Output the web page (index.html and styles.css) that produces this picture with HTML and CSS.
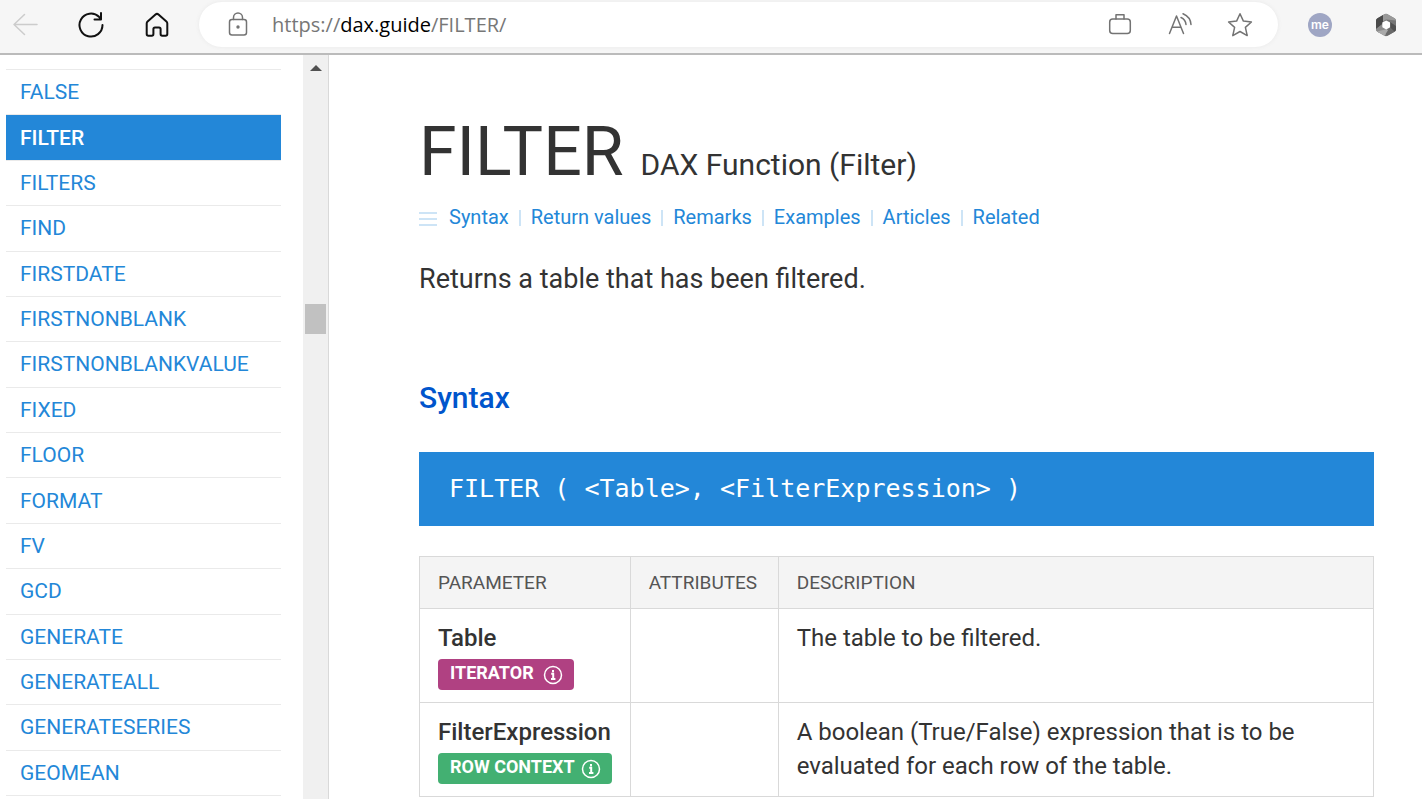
FILE: index.html
```html
<!DOCTYPE html>
<html lang="en">
<head>
<meta charset="utf-8">
<meta name="viewport" content="width=device-width, initial-scale=1">
<title>FILTER – DAX Guide</title>
<link rel="stylesheet" href="styles.css">
</head>
<body>
<header class="toolbar">
  <div class="toolbar-nav">
    <button class="tool" type="button" aria-label="Back" disabled>
      <svg class="icon icon-faded" viewBox="0 0 26 26"><path d="M25 12.500H2M12.500 2.500 2 12.500l10.500 10"/></svg>
    </button>
    <button class="tool" type="button" aria-label="Refresh">
      <svg class="icon icon-dark" viewBox="0 0 26 26"><path d="M24.500 13A11.500 11.500 0 1 1 21 4.800L23 7M23 1v6.500h-6.500"/></svg>
    </button>
    <button class="tool" type="button" aria-label="Home">
      <svg class="icon icon-dark" viewBox="0 0 26 26"><path d="M11.500 2.500 3.600 9.500Q2.700 10.300 2.700 11.600V22q0 1.700 1.700 1.700h3.400q1.600 0 1.600-1.600v-5q0-1.600 1.600-1.600h4q1.600 0 1.600 1.600v5q0 1.600 1.600 1.600h3.400q1.700 0 1.700-1.700V11.600q0-1.300-.900-2.100L14.500 2.500q-1.500-1.300-3 0z"/></svg>
    </button>
  </div>
  <div class="address-bar">
    <button class="bar-tool" type="button" aria-label="Site information">
      <svg class="icon icon-grey" viewBox="0 0 26 26"><rect x="4.500" y="7.500" width="17" height="15.500" rx="2.500"/><path d="M8.500 7.500V5.500a4.500 4.500 0 0 1 9 0v2"/><circle class="dot" cx="13" cy="15" r="1.700"/></svg>
    </button>
    <a class="url" href="https://dax.guide/FILTER/">https://<span class="url-host">dax.guide</span>/FILTER/</a>
    <div class="bar-actions">
      <button class="bar-tool" type="button" aria-label="Shopping">
        <svg class="icon icon-grey" viewBox="0 0 26 26"><rect x="2.700" y="7" width="20.600" height="14.500" rx="3"/><path d="M9 7V2.800h8V7"/></svg>
      </button>
      <button class="bar-tool" type="button" aria-label="Read aloud">
        <svg class="icon icon-grey" viewBox="0 0 26 26"><path d="M2.500 21.500 9.500 4l7 17.500M5.100 15.200h8.800M14 5.500q4.500 2 5 7M16 1.800q7.500 3.200 8 10.700"/></svg>
      </button>
      <button class="bar-tool" type="button" aria-label="Add to favorites">
        <svg class="icon icon-grey" viewBox="0 0 26 26"><path d="m13 1.800 3.400 7.300 8 .9-6 5.400 1.800 8.200L13 19.500l-7.200 4.100 1.800-8.200-6-5.400 8-.9z"/></svg>
      </button>
    </div>
  </div>
  <div class="toolbar-end">
    <button class="profile" type="button">me</button>
    <button class="tool" type="button" aria-label="Extension">
      <svg class="icon" viewBox="0 0 26 26"><path fill="#757575" d="M11.500 2.200q1.500-.8 3 0l7 4Q23 7 23 8.500v9q0 1.500-1.500 2.300l-7 4q-1.500.8-3 0l-7-4Q3 19 3 17.500v-9Q3 7 4.500 6.200z"/><path fill="#4a4a4a" d="M3 8.500Q3 7 4.500 6.200L10 3v8.500L3 17z"/><path fill="#8c8c8c" d="M3 17l6.500-5v3.500l4 2.300-7.500 3-1.500-1Q3 19 3 17z"/><path fill="#aaa" d="m4 19.500 9.500-2.300 3 1.800-5 4.800z"/><path fill="#999" d="M10 3l1.500-.8q1.500-.8 3 0l7 4q1.500.8 1.500 2.300L13 7.500l-3 2z"/><path fill="#505050" d="m17 10 6 4v3.500q0 1.500-1.500 2.300L17 16z"/><path fill="#6a6a6a" d="m17 15 4.500 4.800-7 4-2-1.500z"/><path fill="#fff" d="m13.200 8.500 3.900 2.100v4.600l-3.900 2.200-3.900-2.200v-4.600z"/></svg>
    </button>
  </div>
</header>

<div class="page">
  <nav class="sidebar" aria-label="Functions">
    <ul class="function-list">
      <li><a href="#false">FALSE</a></li>
      <li><a class="current" href="#filter" aria-current="page">FILTER</a></li>
      <li><a href="#filters">FILTERS</a></li>
      <li><a href="#find">FIND</a></li>
      <li><a href="#firstdate">FIRSTDATE</a></li>
      <li><a href="#firstnonblank">FIRSTNONBLANK</a></li>
      <li><a href="#firstnonblankvalue">FIRSTNONBLANKVALUE</a></li>
      <li><a href="#fixed">FIXED</a></li>
      <li><a href="#floor">FLOOR</a></li>
      <li><a href="#format">FORMAT</a></li>
      <li><a href="#fv">FV</a></li>
      <li><a href="#gcd">GCD</a></li>
      <li><a href="#generate">GENERATE</a></li>
      <li><a href="#generateall">GENERATEALL</a></li>
      <li><a href="#generateseries">GENERATESERIES</a></li>
      <li><a href="#geomean">GEOMEAN</a></li>
    </ul>
    <div class="scrollbar" aria-hidden="true">
      <span class="scroll-arrow"></span>
      <span class="scroll-thumb"></span>
    </div>
  </nav>

  <main class="content">
    <h1 class="title">FILTER <small class="subtitle">DAX Function (Filter)</small></h1>
    <nav class="sections" aria-label="Sections">
      <svg class="menu-icon" viewBox="0 0 18 16"><path d="M0 2h18M0 8h18M0 14h18"/></svg>
      <ul class="section-list">
        <li><a href="#syntax">Syntax</a></li>
        <li><a href="#return-values">Return values</a></li>
        <li><a href="#remarks">Remarks</a></li>
        <li><a href="#examples">Examples</a></li>
        <li><a href="#articles">Articles</a></li>
        <li><a href="#related">Related</a></li>
      </ul>
    </nav>
    <p class="summary">Returns a table that has been filtered.</p>
    <h2 class="heading" id="syntax">Syntax</h2>
    <pre class="code">FILTER ( &lt;Table&gt;, &lt;FilterExpression&gt; )</pre>
    <table class="parameters">
      <thead>
        <tr><th scope="col">PARAMETER</th><th class="attributes" scope="col">ATTRIBUTES</th><th scope="col">DESCRIPTION</th></tr>
      </thead>
      <tbody>
        <tr>
          <td><div class="parameter">Table</div><a class="badge badge-iterator" href="#iterator">ITERATOR <svg class="info" viewBox="0 0 20 20"><circle cx="10" cy="10" r="8.500"/><path class="info-mark" d="M8.200 8.800h2v5M8 14h4.400M10 5v2.200"/></svg></a></td>
          <td></td>
          <td>The table to be filtered.</td>
        </tr>
        <tr>
          <td><div class="parameter">FilterExpression</div><a class="badge badge-context" href="#row-context">ROW CONTEXT <svg class="info" viewBox="0 0 20 20"><circle cx="10" cy="10" r="8.500"/><path class="info-mark" d="M8.200 8.800h2v5M8 14h4.400M10 5v2.200"/></svg></a></td>
          <td></td>
          <td>A boolean (True/False) expression that is to be evaluated for each row of the table.</td>
        </tr>
      </tbody>
    </table>
  </main>
</div>
</body>
</html>
```
FILE: styles.css
```css
* { box-sizing: border-box; }

body {
  margin: 0;
  min-height: 100vh;
  display: flex;
  flex-direction: column;
  background: #fff;
  color: #333;
  font-family: Roboto, sans-serif;
}

a { color: #2387d8; text-decoration: none; }
ul { list-style: none; margin: 0; padding: 0; }
button { border: 0; padding: 0; background: none; font: inherit; }

/* Browser toolbar */
.toolbar {
  display: flex;
  align-items: center;
  padding: 2px 20px 6px 9px;
  background: #f6f6f6;
  border-bottom: 2px solid #bbb;
}
.toolbar-nav { display: flex; gap: 34px; margin-right: 26px; }
.tool { display: flex; width: 32px; justify-content: center; }
.icon { width: 26px; height: 26px; fill: none; stroke-width: 2; stroke-linejoin: round; stroke-linecap: round; }
.icon-faded { stroke: #ccc; stroke-width: 1.5; }
.icon-dark { stroke: #111; }
.icon-grey { stroke: #737373; stroke-width: 1.5; }
.dot { fill: #737373; stroke: none; }
.address-bar {
  flex: 1;
  display: flex;
  align-items: center;
  height: 45px;
  padding: 0 25px 0 26px;
  border-radius: 23px;
  background: #fff;
  box-shadow: 0 0 4px #e8e8e8;
}
.bar-tool { display: flex; }
.url { flex: 1; margin-left: 21px; color: #777; font: 20px/28px "Open Sans", sans-serif; }
.url-host { color: #000; }
.bar-actions { display: flex; gap: 34px; }
.toolbar-end { display: flex; align-items: center; gap: 38px; margin-left: 30px; }
.profile {
  width: 24px;
  height: 24px;
  border-radius: 50%;
  background: #9fa6c4;
  color: #fff;
  font: 600 12px/20px Inter, sans-serif;
}

/* Function list */
.page { flex: 1; display: flex; }
.sidebar { flex: none; width: 329px; display: flex; border-right: 1px solid #d9d9d9; }
.function-list {
  flex: 1;
  display: grid;
  grid-auto-rows: 1fr;
  margin: 14px 22px 3px 6px;
  border-top: 1px solid #eaeaea;
}
.function-list li { display: grid; border-bottom: 1px solid #eaeaea; }
.function-list a { display: flex; align-items: center; padding: 0 14px; font-size: 21px; line-height: 44px; }
.function-list .current { background: #2387d8; color: #fff; font-weight: 500; }
.scrollbar { width: 25px; display: flex; flex-direction: column; align-items: center; background: #f0f0f0; }
.scroll-arrow { margin-top: 10px; border: 6px solid transparent; border-top: 0; border-bottom-color: #505050; }
.scroll-thumb { width: 21px; height: 30px; margin-top: 233px; background: #c1c1c1; }

/* Article */
.content { flex: 1; min-width: 0; padding: 57px 48px 0 90px; }
.title { margin: 0; font-size: 68px; line-height: 80px; font-weight: 400; }
.subtitle { font-size: 30px; }
.sections { display: flex; align-items: center; gap: 12px; }
.menu-icon { width: 18px; height: 16px; margin-top: 4px; stroke: #cde4f6; stroke-width: 2; }
.section-list { display: flex; font-size: 20px; line-height: 24px; }
.section-list li { display: flex; align-items: center; }
.section-list li + li::before { content: ""; width: 2px; height: 16px; margin: 2px 10px 0; background: #cde4f6; }
.summary { margin: 32px 0 0; font-size: 27px; line-height: 36px; }
.heading { margin: 81px 0 0; color: #05c; font-size: 30px; line-height: 40px; font-weight: 500; }
.code {
  margin: 34px 0 30px;
  padding: 20px 30px;
  background: #2387d8;
  color: #fff;
  font: 25px/34px "DejaVu Sans Mono", monospace;
}

.parameters { width: 100%; border-collapse: collapse; font-size: 24px; line-height: 34px; }
.parameters th,
.parameters td { padding: 12px 18px; border: 1px solid #d9d9d9; text-align: left; vertical-align: top; }
.parameters td:last-child { width: 100%; }
.parameters th { background: #f4f4f4; color: #555; font-size: 19px; line-height: 27px; font-weight: 400; }
.parameters .attributes { min-width: 148px; }
.parameter { font-weight: 500; }
.badge {
  display: flex;
  align-items: center;
  justify-content: space-between;
  gap: 6px;
  width: max-content;
  min-width: 136px;
  margin: 4px 0 0;
  padding: 0 11px 3px 12px;
  border-radius: 4px;
  color: #fff;
  font-size: 18px;
  line-height: 28px;
  font-weight: 700;
}
.badge-iterator { background: #b04182; }
.badge-context { background: #43b072; }
.info { width: 20px; height: 20px; margin-top: 3px; fill: none; stroke: #fff; stroke-width: 1.5; }
.info-mark { stroke-width: 2; }
```
